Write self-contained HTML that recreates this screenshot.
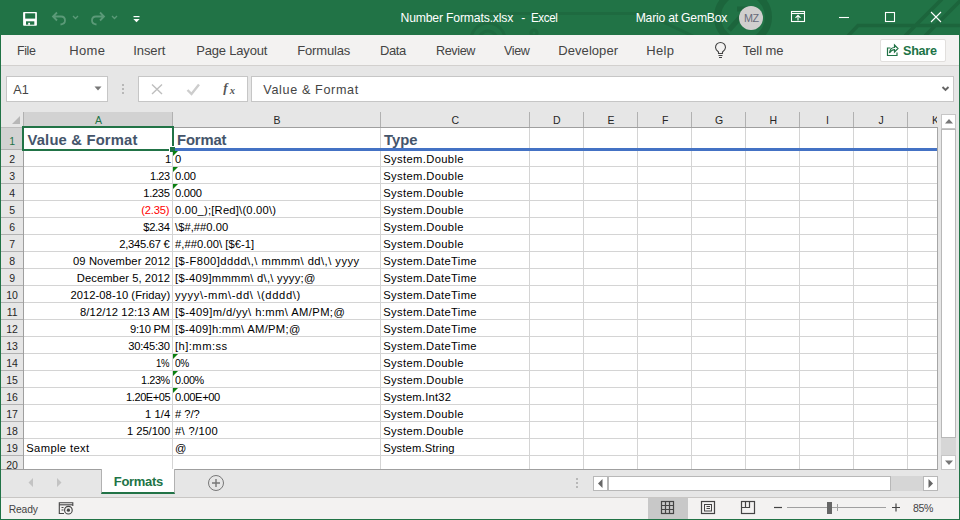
<!DOCTYPE html>
<html><head><meta charset="utf-8"><title>Number Formats.xlsx - Excel</title>
<style>
html,body{margin:0;padding:0}
body{width:960px;height:520px;position:relative;overflow:hidden;background:#e6e6e6;font-family:"Liberation Sans","DejaVu Sans",sans-serif;color:#444}
div,span,svg{position:absolute;box-sizing:border-box}
.t{white-space:pre}
#title{left:0;top:0;width:960px;height:35px;background:#217346}
#tabs{left:1px;top:35px;width:958px;height:30px;background:#f3f2f1}
#fb{left:1px;top:65px;width:958px;height:47px;background:#e6e6e6;border-top:1px solid #d2d0ce}
.box{background:#fff;border:1px solid #c6c6c6}
.vl{width:1px;background:#d4d4d4;top:128px;height:341px}
.hl{height:1px;background:#d4d4d4;left:24px;width:913px}
</style></head><body>

<div id="title"></div>
<svg style="left:0;top:0" width="960" height="35" viewBox="0 0 960 35">
<g fill="none" stroke="#1c643c" stroke-width="3.5" opacity="0.9">
<circle cx="743" cy="17" r="25.5" stroke-width="7"/>
<path d="M729 30 L746 11 M737 9 L749 9 L749 21" stroke-width="5"/>
<path d="M848 36 L858 25.5 L960 25.5 M905 36 L942 -1 M925 36 L962 -1"/>
<path d="M463 13.5 L645 13.5 L693 36" stroke-width="3" opacity="0.6"/>
<circle cx="488" cy="40" r="17" stroke-width="3" opacity="0.6"/>
<circle cx="488" cy="40" r="9" stroke-width="3" opacity="0.5"/>
<circle cx="534" cy="33" r="3" stroke-width="3" opacity="0.6"/>
</g>
</svg>
<svg style="left:0;top:0" width="160" height="35" viewBox="0 0 160 35">
<rect x="23.100" y="12" width="13.800" height="13.800" rx="0.800" fill="#fff"/>
<rect x="25.200" y="13.300" width="10" height="5.300" fill="#217346"/>
<rect x="26" y="21.300" width="8.300" height="3.400" fill="#217346"/>
<rect x="28.200" y="22.800" width="1.800" height="2" fill="#fff"/>
<g fill="none" stroke="#5b9a78" stroke-width="1.8">
<path d="M57 12.5 L53 16.5 L57 20.5 M53.5 16.5 H61 Q65 16.5 65 20.5 Q65 24 60.5 24.5"/>
<path d="M100 12.5 L104 16.5 L100 20.5 M103.500 16.5 H96 Q92 16.5 92 20.5 Q92 24 96.500 24.5"/>
<path d="M73 16 L75.500 18.5 L78 16" stroke-width="1.300"/>
<path d="M112 16 L114.500 18.500 L117 16" stroke-width="1.300"/>
</g>
<rect x="133.500" y="16" width="6" height="1.200" fill="#fff"/>
<path d="M133.300 19 H139.700 L136.500 22.2 Z" fill="#fff"/>
</svg>
<span class="t" style="left:400.50px;top:9.50px;font-size:12.2px;line-height:16px;color:#fff;letter-spacing:-0.164px">Number Formats.xlsx</span>
<span class="t" style="left:521.25px;top:9.50px;font-size:12.2px;line-height:16px;color:#fff">-</span>
<span class="t" style="left:530.80px;top:9.50px;font-size:12.2px;line-height:16px;color:#fff;letter-spacing:-0.400px;transform:scaleX(0.953);transform-origin:0 0">Excel</span>
<span class="t" style="left:635.70px;top:9.50px;font-size:12.2px;line-height:16px;color:#fff;letter-spacing:-0.223px">Mario at GemBox</span>
<div style="left:739px;top:6px;width:24px;height:24px;border-radius:12px;background:#d0cfce"></div>
<span class="t" style="left:743.70px;top:11.00px;font-size:10.9px;line-height:14px;color:#666a7a;letter-spacing:-0.400px;transform:scaleX(0.989);transform-origin:0 0">MZ</span>
<svg style="left:780px;top:0" width="180" height="35" viewBox="780 0 180 35">
<g fill="none" stroke="#fff" stroke-width="1.1">
<rect x="791.5" y="11.500" width="13" height="10"/>
<path d="M791.500 13.500 H804.500" />
<path d="M798 20.500 V15.500 M795.500 17.800 L798 15.300 L800.500 17.800"/>
<path d="M839 17.500 H849"/>
<rect x="885.500" y="12.500" width="9" height="9"/>
<path d="M931 12 L941 22 M941 12 L931 22"/>
</g></svg>
<div id="tabs"></div>
<span class="t" style="left:17.34px;top:42.00px;font-size:13px;line-height:17px;color:#444;letter-spacing:-0.400px;transform:scaleX(0.956);transform-origin:0 0">File</span>
<span class="t" style="left:69.30px;top:42.00px;font-size:13px;line-height:17px;color:#444;letter-spacing:0.318px">Home</span>
<span class="t" style="left:133.30px;top:42.00px;font-size:13px;line-height:17px;color:#444;letter-spacing:-0.100px">Insert</span>
<span class="t" style="left:196.30px;top:42.00px;font-size:13px;line-height:17px;color:#444;letter-spacing:-0.199px">Page Layout</span>
<span class="t" style="left:297.30px;top:42.00px;font-size:13px;line-height:17px;color:#444;letter-spacing:-0.182px">Formulas</span>
<span class="t" style="left:379.70px;top:42.00px;font-size:13px;line-height:17px;color:#444;letter-spacing:-0.400px;transform:scaleX(0.999);transform-origin:0 0">Data</span>
<span class="t" style="left:435.73px;top:42.00px;font-size:13px;line-height:17px;color:#444;letter-spacing:-0.400px;transform:scaleX(0.969);transform-origin:0 0">Review</span>
<span class="t" style="left:504.30px;top:42.00px;font-size:13px;line-height:17px;color:#444;letter-spacing:-0.400px;transform:scaleX(0.965);transform-origin:0 0">View</span>
<span class="t" style="left:558.30px;top:42.00px;font-size:13px;line-height:17px;color:#444;letter-spacing:0.059px">Developer</span>
<span class="t" style="left:646.30px;top:42.00px;font-size:13px;line-height:17px;color:#444;letter-spacing:0.298px">Help</span>
<span class="t" style="left:742.70px;top:42.00px;font-size:13px;line-height:17px;color:#444;letter-spacing:-0.058px">Tell me</span>
<svg style="left:710px;top:40px" width="20" height="22" viewBox="710 40 20 22"><g fill="none" stroke="#444" stroke-width="1.1">
<path d="M718.5 53.500 V52 Q715.500 49.500 715.500 47.500 A5 5 0 0 1 725.500 47.500 Q725.500 49.500 722.500 52 V53.500 Z"/>
<path d="M718.500 55.500 H722.500 M719 57.500 H722"/></g></svg>
<div class="box" style="left:880px;top:39px;width:66px;height:23px;border-color:#e1dfdd;border-radius:2px"></div>
<svg style="left:884px;top:42px" width="20" height="18" viewBox="884 42 20 18"><g fill="none" stroke="#217346" stroke-width="1.2">
<path d="M890.500 48 H887.500 V55.500 H897 V52.500"/>
<path d="M889.500 53 Q890 47.500 894.500 47.500 V45 L898 48.500 L894.500 52 V49.700 Q891.500 49.700 889.500 53 Z"/></g></svg>
<span class="t" style="left:903.00px;top:43.00px;font-size:12.6px;line-height:16px;color:#217346;letter-spacing:-0.249px;font-weight:bold">Share</span>
<div id="fb"></div>
<div class="box" style="left:6px;top:76px;width:102px;height:26px"></div>
<span class="t" style="left:13.30px;top:82.00px;font-size:12.6px;line-height:16px;color:#444">A1</span>
<svg style="left:93.5px;top:86px" width="8" height="5"><path d="M0.500 0.500 H7.500 L4 4.500 Z" fill="#777"/></svg>
<svg style="left:121px;top:83px" width="4" height="12"><g fill="#b8b8b8"><rect x="1" y="1" width="2" height="2"/><rect x="1" y="5" width="2" height="2"/><rect x="1" y="9" width="2" height="2"/></g></svg>
<div class="box" style="left:138px;top:76px;width:110px;height:26px"></div>
<svg style="left:138px;top:76px" width="110" height="26" viewBox="138 76 110 26">
<path d="M152 84.500 L162 94 M162 84.500 L152 94" stroke="#bebebe" stroke-width="1.400" fill="none"/>
<path d="M187.500 90 L191.500 94 L199 84.500" stroke="#cdcdcd" stroke-width="2.400" fill="none"/>
</svg>
<span class="t" style="left:223.30px;top:79.30px;font-size:13px;line-height:17px;color:#555;font-weight:bold;font-style:italic;font-family:'Liberation Serif','DejaVu Serif',serif">f</span>
<span class="t" style="left:229.80px;top:83.50px;font-size:10.5px;line-height:14px;color:#555;font-weight:bold;font-style:italic;font-family:'Liberation Serif','DejaVu Serif',serif">x</span>
<div class="box" style="left:251px;top:76px;width:703px;height:26px"></div>
<span class="t" style="left:263.30px;top:82.00px;font-size:12.6px;line-height:16px;color:#444;letter-spacing:0.642px">Value &amp; Format</span>
<svg style="left:940px;top:84px" width="12" height="10"><path d="M2.500 3 L5.500 6 L8.500 3" stroke="#666" stroke-width="1.900" fill="none"/></svg>
<div style="left:24px;top:128px;width:913px;height:341px;background:#fff"></div>
<svg style="left:12px;top:116px" width="9" height="9"><path d="M8 0 V8 H0 Z" fill="#b7b7b7"/></svg>
<div style="left:23px;top:112px;width:149px;height:15px;background:#d2d2d2"></div>
<span class="t" style="left:95.00px;top:113.00px;font-size:10.5px;line-height:14px;color:#217346">A</span>
<span class="t" style="left:273.50px;top:113.00px;font-size:10.5px;line-height:14px;color:#262626">B</span>
<span class="t" style="left:451.50px;top:113.00px;font-size:10.5px;line-height:14px;color:#262626">C</span>
<span class="t" style="left:553.00px;top:113.00px;font-size:10.5px;line-height:14px;color:#262626">D</span>
<span class="t" style="left:607.50px;top:113.00px;font-size:10.5px;line-height:14px;color:#262626">E</span>
<span class="t" style="left:662.00px;top:113.00px;font-size:10.5px;line-height:14px;color:#262626">F</span>
<span class="t" style="left:715.00px;top:113.00px;font-size:10.5px;line-height:14px;color:#262626">G</span>
<span class="t" style="left:769.50px;top:113.00px;font-size:10.5px;line-height:14px;color:#262626">H</span>
<span class="t" style="left:826.00px;top:113.00px;font-size:10.5px;line-height:14px;color:#262626">I</span>
<span class="t" style="left:878.50px;top:113.00px;font-size:10.5px;line-height:14px;color:#262626">J</span>
<span class="t" style="left:932.00px;top:113.00px;font-size:10.5px;line-height:14px;color:#262626">K</span>
<div style="left:937px;top:112px;width:4px;height:15px;background:#e6e6e6"></div>
<div style="left:23px;top:112px;width:1px;height:15px;background:#b1b1b1"></div>
<div style="left:172px;top:112px;width:1px;height:15px;background:#b1b1b1"></div>
<div style="left:380px;top:112px;width:1px;height:15px;background:#b1b1b1"></div>
<div style="left:529px;top:112px;width:1px;height:15px;background:#b1b1b1"></div>
<div style="left:583px;top:112px;width:1px;height:15px;background:#b1b1b1"></div>
<div style="left:637px;top:112px;width:1px;height:15px;background:#b1b1b1"></div>
<div style="left:691px;top:112px;width:1px;height:15px;background:#b1b1b1"></div>
<div style="left:745px;top:112px;width:1px;height:15px;background:#b1b1b1"></div>
<div style="left:799px;top:112px;width:1px;height:15px;background:#b1b1b1"></div>
<div style="left:853px;top:112px;width:1px;height:15px;background:#b1b1b1"></div>
<div style="left:907px;top:112px;width:1px;height:15px;background:#b1b1b1"></div>
<div style="left:1px;top:127px;width:937px;height:1px;background:#9f9f9f"></div>
<div style="left:1px;top:127px;width:21px;height:1px;background:#bdbdbd"></div>
<div style="left:1px;top:128px;width:22px;height:341px;background:#e6e6e6"></div>
<div style="left:1px;top:128px;width:22px;height:21px;background:#d2d2d2"></div>
<div style="left:23px;top:128px;width:1px;height:341px;background:#9f9f9f"></div>
<div style="left:1px;top:149px;width:22px;height:1px;background:#b1b1b1"></div>
<div style="left:1px;top:166px;width:22px;height:1px;background:#b1b1b1"></div>
<div style="left:1px;top:183px;width:22px;height:1px;background:#b1b1b1"></div>
<div style="left:1px;top:200px;width:22px;height:1px;background:#b1b1b1"></div>
<div style="left:1px;top:217px;width:22px;height:1px;background:#b1b1b1"></div>
<div style="left:1px;top:234px;width:22px;height:1px;background:#b1b1b1"></div>
<div style="left:1px;top:251px;width:22px;height:1px;background:#b1b1b1"></div>
<div style="left:1px;top:268px;width:22px;height:1px;background:#b1b1b1"></div>
<div style="left:1px;top:285px;width:22px;height:1px;background:#b1b1b1"></div>
<div style="left:1px;top:302px;width:22px;height:1px;background:#b1b1b1"></div>
<div style="left:1px;top:319px;width:22px;height:1px;background:#b1b1b1"></div>
<div style="left:1px;top:336px;width:22px;height:1px;background:#b1b1b1"></div>
<div style="left:1px;top:353px;width:22px;height:1px;background:#b1b1b1"></div>
<div style="left:1px;top:370px;width:22px;height:1px;background:#b1b1b1"></div>
<div style="left:1px;top:387px;width:22px;height:1px;background:#b1b1b1"></div>
<div style="left:1px;top:404px;width:22px;height:1px;background:#b1b1b1"></div>
<div style="left:1px;top:421px;width:22px;height:1px;background:#b1b1b1"></div>
<div style="left:1px;top:438px;width:22px;height:1px;background:#b1b1b1"></div>
<div style="left:1px;top:455px;width:22px;height:1px;background:#b1b1b1"></div>
<div class="vl" style="left:172px"></div>
<div class="vl" style="left:380px"></div>
<div class="vl" style="left:529px"></div>
<div class="vl" style="left:583px"></div>
<div class="vl" style="left:637px"></div>
<div class="vl" style="left:691px"></div>
<div class="vl" style="left:745px"></div>
<div class="vl" style="left:799px"></div>
<div class="vl" style="left:853px"></div>
<div class="vl" style="left:907px"></div>
<div class="hl" style="top:149px"></div>
<div class="hl" style="top:166px"></div>
<div class="hl" style="top:183px"></div>
<div class="hl" style="top:200px"></div>
<div class="hl" style="top:217px"></div>
<div class="hl" style="top:234px"></div>
<div class="hl" style="top:251px"></div>
<div class="hl" style="top:268px"></div>
<div class="hl" style="top:285px"></div>
<div class="hl" style="top:302px"></div>
<div class="hl" style="top:319px"></div>
<div class="hl" style="top:336px"></div>
<div class="hl" style="top:353px"></div>
<div class="hl" style="top:370px"></div>
<div class="hl" style="top:387px"></div>
<div class="hl" style="top:404px"></div>
<div class="hl" style="top:421px"></div>
<div class="hl" style="top:438px"></div>
<div class="hl" style="top:455px"></div>
<div style="left:937px;top:127px;width:1px;height:343px;background:#a6a6a6"></div>
<span class="t" style="left:9.20px;top:134.00px;font-size:10.5px;line-height:14px;color:#217346">1</span>
<span class="t" style="left:9.20px;top:152.00px;font-size:10.5px;line-height:14px;color:#262626">2</span>
<span class="t" style="left:9.20px;top:169.00px;font-size:10.5px;line-height:14px;color:#262626">3</span>
<span class="t" style="left:9.20px;top:186.00px;font-size:10.5px;line-height:14px;color:#262626">4</span>
<span class="t" style="left:9.20px;top:203.00px;font-size:10.5px;line-height:14px;color:#262626">5</span>
<span class="t" style="left:9.20px;top:220.00px;font-size:10.5px;line-height:14px;color:#262626">6</span>
<span class="t" style="left:9.20px;top:237.00px;font-size:10.5px;line-height:14px;color:#262626">7</span>
<span class="t" style="left:9.20px;top:254.00px;font-size:10.5px;line-height:14px;color:#262626">8</span>
<span class="t" style="left:9.20px;top:271.00px;font-size:10.5px;line-height:14px;color:#262626">9</span>
<span class="t" style="left:6.28px;top:288.00px;font-size:10.5px;line-height:14px;color:#262626">10</span>
<span class="t" style="left:6.67px;top:305.00px;font-size:10.5px;line-height:14px;color:#262626">11</span>
<span class="t" style="left:6.28px;top:322.00px;font-size:10.5px;line-height:14px;color:#262626">12</span>
<span class="t" style="left:6.28px;top:339.00px;font-size:10.5px;line-height:14px;color:#262626">13</span>
<span class="t" style="left:6.28px;top:356.00px;font-size:10.5px;line-height:14px;color:#262626">14</span>
<span class="t" style="left:6.28px;top:373.00px;font-size:10.5px;line-height:14px;color:#262626">15</span>
<span class="t" style="left:6.28px;top:390.00px;font-size:10.5px;line-height:14px;color:#262626">16</span>
<span class="t" style="left:6.28px;top:407.00px;font-size:10.5px;line-height:14px;color:#262626">17</span>
<span class="t" style="left:6.28px;top:424.00px;font-size:10.5px;line-height:14px;color:#262626">18</span>
<span class="t" style="left:6.28px;top:441.00px;font-size:10.5px;line-height:14px;color:#262626">19</span>
<span class="t" style="left:6.28px;top:458.00px;font-size:10.5px;line-height:14px;color:#262626">20</span>
<span class="t" style="left:27.50px;top:130.60px;font-size:14.8px;line-height:19px;color:#44546a;letter-spacing:0.170px;font-weight:bold">Value &amp; Format</span>
<span class="t" style="left:177.00px;top:130.60px;font-size:14.8px;line-height:19px;color:#44546a;letter-spacing:-0.144px;font-weight:bold">Format</span>
<span class="t" style="left:384.00px;top:130.60px;font-size:14.8px;line-height:19px;color:#44546a;letter-spacing:0.031px;font-weight:bold">Type</span>
<div style="left:174px;top:148px;width:763px;height:3px;background:#4472c4"></div>
<span class="t" style="left:165.00px;top:152.00px;font-size:11.2px;line-height:15px;color:#000">1</span>
<span class="t" style="left:175.00px;top:152.00px;font-size:11.2px;line-height:15px;color:#000">0</span>
<span class="t" style="left:383.30px;top:152.00px;font-size:11.2px;line-height:15px;color:#000;letter-spacing:0.364px">System.Double</span>
<span class="t" style="left:150.00px;top:169.00px;font-size:11.2px;line-height:15px;color:#000;letter-spacing:-0.400px;transform:scaleX(0.970);transform-origin:0 0">1.23</span>
<span class="t" style="left:175.00px;top:169.00px;font-size:11.2px;line-height:15px;color:#000;letter-spacing:-0.267px">0.00</span>
<span class="t" style="left:383.30px;top:169.00px;font-size:11.2px;line-height:15px;color:#000;letter-spacing:0.364px">System.Double</span>
<span class="t" style="left:143.25px;top:186.00px;font-size:11.2px;line-height:15px;color:#000;letter-spacing:-0.319px">1.235</span>
<span class="t" style="left:175.00px;top:186.00px;font-size:11.2px;line-height:15px;color:#000;letter-spacing:-0.256px">0.000</span>
<span class="t" style="left:383.30px;top:186.00px;font-size:11.2px;line-height:15px;color:#000;letter-spacing:0.364px">System.Double</span>
<span class="t" style="left:141.25px;top:203.00px;font-size:11.2px;line-height:15px;color:#ff0000;letter-spacing:-0.200px">(2.35)</span>
<span class="t" style="left:175.00px;top:203.00px;font-size:11.2px;line-height:15px;color:#000;letter-spacing:0.209px">0.00_);[Red]\(0.00\)</span>
<span class="t" style="left:383.30px;top:203.00px;font-size:11.2px;line-height:15px;color:#000;letter-spacing:0.364px">System.Double</span>
<span class="t" style="left:143.25px;top:220.00px;font-size:11.2px;line-height:15px;color:#000;letter-spacing:-0.319px">$2.34</span>
<span class="t" style="left:175.00px;top:220.00px;font-size:11.2px;line-height:15px;color:#000;letter-spacing:0.038px">\$#,##0.00</span>
<span class="t" style="left:383.30px;top:220.00px;font-size:11.2px;line-height:15px;color:#000;letter-spacing:0.364px">System.Double</span>
<span class="t" style="left:119.25px;top:237.00px;font-size:11.2px;line-height:15px;color:#000;letter-spacing:-0.267px">2,345.67 €</span>
<span class="t" style="left:175.00px;top:237.00px;font-size:11.2px;line-height:15px;color:#000;letter-spacing:0.049px">#,##0.00\ [$€-1]</span>
<span class="t" style="left:383.30px;top:237.00px;font-size:11.2px;line-height:15px;color:#000;letter-spacing:0.364px">System.Double</span>
<span class="t" style="left:73.00px;top:254.00px;font-size:11.2px;line-height:15px;color:#000;letter-spacing:0.121px">09 November 2012</span>
<span class="t" style="left:175.00px;top:254.00px;font-size:11.2px;line-height:15px;color:#000;letter-spacing:0.463px">[$-F800]dddd\,\ mmmm\ dd\,\ yyyy</span>
<span class="t" style="left:383.30px;top:254.00px;font-size:11.2px;line-height:15px;color:#000;letter-spacing:0.338px">System.DateTime</span>
<span class="t" style="left:76.75px;top:271.00px;font-size:11.2px;line-height:15px;color:#000;letter-spacing:0.079px">December 5, 2012</span>
<span class="t" style="left:175.00px;top:271.00px;font-size:11.2px;line-height:15px;color:#000;letter-spacing:0.284px">[$-409]mmmm\ d\,\ yyyy;@</span>
<span class="t" style="left:383.30px;top:271.00px;font-size:11.2px;line-height:15px;color:#000;letter-spacing:0.338px">System.DateTime</span>
<span class="t" style="left:70.50px;top:288.00px;font-size:11.2px;line-height:15px;color:#000;letter-spacing:0.048px">2012-08-10 (Friday)</span>
<span class="t" style="left:175.00px;top:288.00px;font-size:11.2px;line-height:15px;color:#000;letter-spacing:0.635px">yyyy\-mm\-dd\ \(dddd\)</span>
<span class="t" style="left:383.30px;top:288.00px;font-size:11.2px;line-height:15px;color:#000;letter-spacing:0.338px">System.DateTime</span>
<span class="t" style="left:80.00px;top:305.00px;font-size:11.2px;line-height:15px;color:#000;letter-spacing:0.117px">8/12/12 12:13 AM</span>
<span class="t" style="left:175.00px;top:305.00px;font-size:11.2px;line-height:15px;color:#000;letter-spacing:0.409px">[$-409]m/d/yy\ h:mm\ AM/PM;@</span>
<span class="t" style="left:383.30px;top:305.00px;font-size:11.2px;line-height:15px;color:#000;letter-spacing:0.338px">System.DateTime</span>
<span class="t" style="left:130.00px;top:322.00px;font-size:11.2px;line-height:15px;color:#000;letter-spacing:-0.266px">9:10 PM</span>
<span class="t" style="left:175.00px;top:322.00px;font-size:11.2px;line-height:15px;color:#000;letter-spacing:0.300px">[$-409]h:mm\ AM/PM;@</span>
<span class="t" style="left:383.30px;top:322.00px;font-size:11.2px;line-height:15px;color:#000;letter-spacing:0.338px">System.DateTime</span>
<span class="t" style="left:128.25px;top:339.00px;font-size:11.2px;line-height:15px;color:#000;letter-spacing:-0.261px">30:45:30</span>
<span class="t" style="left:175.00px;top:339.00px;font-size:11.2px;line-height:15px;color:#000;letter-spacing:0.452px">[h]:mm:ss</span>
<span class="t" style="left:383.30px;top:339.00px;font-size:11.2px;line-height:15px;color:#000;letter-spacing:0.338px">System.DateTime</span>
<span class="t" style="left:156.25px;top:356.00px;font-size:11.2px;line-height:15px;color:#000;letter-spacing:-0.400px;transform:scaleX(0.853);transform-origin:0 0">1%</span>
<span class="t" style="left:175.00px;top:356.00px;font-size:11.2px;line-height:15px;color:#000;letter-spacing:-0.400px;transform:scaleX(0.901);transform-origin:0 0">0%</span>
<span class="t" style="left:383.30px;top:356.00px;font-size:11.2px;line-height:15px;color:#000;letter-spacing:0.364px">System.Double</span>
<span class="t" style="left:140.50px;top:373.00px;font-size:11.2px;line-height:15px;color:#000;letter-spacing:-0.400px;transform:scaleX(0.969);transform-origin:0 0">1.23%</span>
<span class="t" style="left:175.00px;top:373.00px;font-size:11.2px;line-height:15px;color:#000;letter-spacing:-0.400px;transform:scaleX(0.969);transform-origin:0 0">0.00%</span>
<span class="t" style="left:383.30px;top:373.00px;font-size:11.2px;line-height:15px;color:#000;letter-spacing:0.364px">System.Double</span>
<span class="t" style="left:125.50px;top:390.00px;font-size:11.2px;line-height:15px;color:#000;letter-spacing:-0.400px;transform:scaleX(0.985);transform-origin:0 0">1.20E+05</span>
<span class="t" style="left:175.00px;top:390.00px;font-size:11.2px;line-height:15px;color:#000;letter-spacing:-0.400px;transform:scaleX(0.996);transform-origin:0 0">0.00E+00</span>
<span class="t" style="left:383.30px;top:390.00px;font-size:11.2px;line-height:15px;color:#000;letter-spacing:0.212px">System.Int32</span>
<span class="t" style="left:145.00px;top:407.00px;font-size:11.2px;line-height:15px;color:#000;letter-spacing:0.085px">1 1/4</span>
<span class="t" style="left:175.00px;top:407.00px;font-size:11.2px;line-height:15px;color:#000;letter-spacing:-0.040px"># ?/?</span>
<span class="t" style="left:383.30px;top:407.00px;font-size:11.2px;line-height:15px;color:#000;letter-spacing:0.364px">System.Double</span>
<span class="t" style="left:127.00px;top:424.00px;font-size:11.2px;line-height:15px;color:#000;letter-spacing:-0.047px">1 25/100</span>
<span class="t" style="left:175.00px;top:424.00px;font-size:11.2px;line-height:15px;color:#000;letter-spacing:0.327px">#\ ?/100</span>
<span class="t" style="left:383.30px;top:424.00px;font-size:11.2px;line-height:15px;color:#000;letter-spacing:0.364px">System.Double</span>
<span class="t" style="left:26.25px;top:441.00px;font-size:11.2px;line-height:15px;color:#000;letter-spacing:0.379px">Sample text</span>
<span class="t" style="left:175.00px;top:441.00px;font-size:11.2px;line-height:15px;color:#000">@</span>
<span class="t" style="left:383.30px;top:441.00px;font-size:11.2px;line-height:15px;color:#000;letter-spacing:0.132px">System.String</span>
<div style="left:1px;top:470px;width:100px;height:10px;background:#e6e6e6"></div>
<div style="left:22px;top:126px;width:152px;height:25px;border:2px solid #217346"></div>
<div style="left:169px;top:146px;width:6px;height:6px;background:#217346;border-left:1px solid #fff;border-top:1px solid #fff"></div>
<svg style="left:173px;top:151px" width="5" height="5"><path d="M0 0 H5 L0 5 Z" fill="#0a7f10"/></svg>
<svg style="left:173px;top:167px" width="5" height="5"><path d="M0 0 H5 L0 5 Z" fill="#0a7f10"/></svg>
<svg style="left:173px;top:184px" width="5" height="5"><path d="M0 0 H5 L0 5 Z" fill="#0a7f10"/></svg>
<svg style="left:173px;top:354px" width="5" height="5"><path d="M0 0 H5 L0 5 Z" fill="#0a7f10"/></svg>
<svg style="left:173px;top:371px" width="5" height="5"><path d="M0 0 H5 L0 5 Z" fill="#0a7f10"/></svg>
<svg style="left:173px;top:388px" width="5" height="5"><path d="M0 0 H5 L0 5 Z" fill="#0a7f10"/></svg>
<div class="box" style="left:941px;top:114px;width:15px;height:15px;border-color:#c6c6c6"></div>
<svg style="left:945px;top:119px" width="8" height="5"><path d="M0 4.500 H8 L4 0 Z" fill="#777"/></svg>
<div style="left:941px;top:129px;width:15px;height:326px;background:#d6d6d6"></div>
<div class="box" style="left:941px;top:129px;width:15px;height:309px;border-color:#b8b8b8"></div>
<div class="box" style="left:941px;top:455px;width:15px;height:15px;border-color:#c6c6c6"></div>
<svg style="left:945px;top:460px" width="8" height="5"><path d="M0 0.500 H8 L4 5 Z" fill="#777"/></svg>
<div style="left:1px;top:469px;width:937px;height:1px;background:#9f9f9f"></div>
<div style="left:101px;top:469px;width:74px;height:25px;background:#fff;border-left:1px solid #b1b1b1;border-right:1px solid #b1b1b1;border-bottom:2px solid #217346"></div>
<span class="t" style="left:113.80px;top:473.30px;font-size:13px;line-height:17px;color:#217346;letter-spacing:-0.310px;font-weight:bold">Formats</span>
<svg style="left:26px;top:477px" width="40" height="11"><path d="M7 1 V10 L2.500 5.500 Z M31 1 V10 L35.500 5.500 Z" fill="#c3c3c3"/></svg>
<svg style="left:207px;top:474px" width="18" height="18"><circle cx="9" cy="9" r="7.500" fill="none" stroke="#777" stroke-width="1"/><path d="M5 9 H13 M9 5 V13" stroke="#777" stroke-width="1.400"/></svg>
<svg style="left:575px;top:478px" width="4" height="12"><g fill="#b8b8b8"><rect x="1" y="0" width="2" height="2"/><rect x="1" y="4" width="2" height="2"/><rect x="1" y="8" width="2" height="2"/></g></svg>
<div style="left:593px;top:476px;width:345px;height:15px;background:#d6d6d6"></div>
<div class="box" style="left:593px;top:476px;width:15px;height:15px;border-color:#b8b8b8"></div>
<svg style="left:597px;top:479px" width="6" height="9"><path d="M5.500 0 V9 L1 4.500 Z" fill="#666"/></svg>
<div class="box" style="left:608px;top:476px;width:283px;height:15px;border-color:#b8b8b8"></div>
<div class="box" style="left:923px;top:476px;width:15px;height:15px;border-color:#b8b8b8"></div>
<svg style="left:928px;top:479px" width="6" height="9"><path d="M0.500 0 V9 L5 4.500 Z" fill="#666"/></svg>
<div style="left:1px;top:497px;width:958px;height:22px;background:#f3f2f1;border-top:1px solid #c8c6c4"></div>
<span class="t" style="left:8.75px;top:502.70px;font-size:10.3px;line-height:13px;color:#444;letter-spacing:-0.154px">Ready</span>
<svg style="left:56px;top:499px" width="20" height="18" viewBox="56 499 20 18"><g fill="none" stroke="#444" stroke-width="1.100">
<path d="M64 513.500 H59.300 V502.800 H72.800 V506"/><path d="M59.300 504.800 H72.800"/><path d="M61.500 507.500 H63.500 M61.500 510 H63.500" />
<circle cx="68.400" cy="510.200" r="3.800"/><circle cx="68.400" cy="510.200" r="1.600" fill="#444" stroke="none"/></g></svg>
<div style="left:648px;top:498px;width:40px;height:21px;background:#c8c8c8"></div>
<svg style="left:660px;top:500px" width="100" height="16" viewBox="660 500 100 16"><g fill="none" stroke="#444" stroke-width="1.200">
<rect x="661.500" y="501.500" width="12" height="12"/><path d="M665.500 501.500 V513.500 M669.500 501.500 V513.500 M661.500 505.500 H673.500 M661.500 509.500 H673.500"/>
<rect x="701.500" y="501.500" width="13" height="12"/><rect x="704.500" y="504.500" width="7" height="6.500" stroke-width="1"/><path d="M706.500 506.500 H710 M706.500 508.500 H710" stroke-width="1"/>
<rect x="741.500" y="501.500" width="13" height="12"/><path d="M741.500 507.500 H749.500 V501.500 M745.500 501.500 V507.500"/>
</g></svg>
<svg style="left:770px;top:500px" width="135" height="16" viewBox="770 500 135 16"><g fill="none" stroke="#444">
<path d="M774 507.500 H782" stroke-width="1.200"/><path d="M787 507.500 H886" stroke="#a0a0a0" stroke-width="1"/>
<path d="M837.500 504 V511" stroke="#a0a0a0"/><path d="M892 507.500 H900 M896 503.500 V511.500" stroke-width="1.200"/></g>
<rect x="827" y="502" width="5" height="12" fill="#666"/></svg>
<span class="t" style="left:913.20px;top:500.70px;font-size:10.7px;line-height:14px;color:#444;letter-spacing:-0.400px;transform:scaleX(0.986);transform-origin:0 0">85%</span>
<div style="left:0;top:35px;width:1px;height:485px;background:#217346"></div>
<div style="left:959px;top:35px;width:1px;height:485px;background:#217346"></div>
<div style="left:0;top:519px;width:960px;height:1px;background:#217346"></div>
</body></html>
